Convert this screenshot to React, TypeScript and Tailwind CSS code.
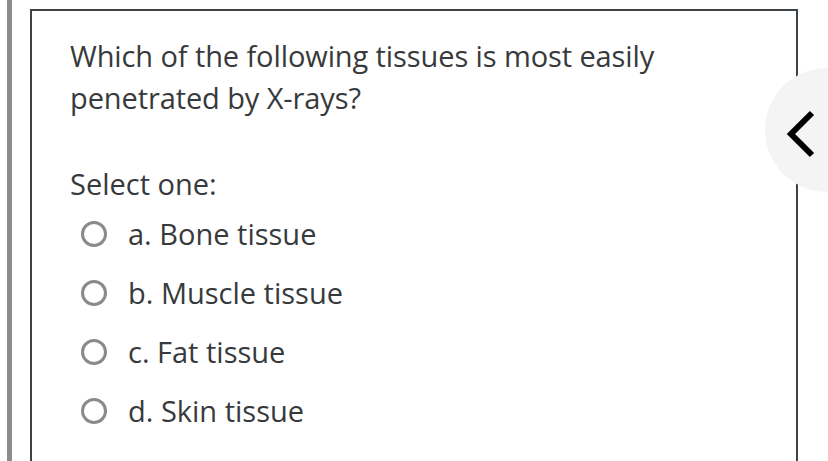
const options = ['a. Bone tissue', 'b. Muscle tissue', 'c. Fat tissue', 'd. Skin tissue'];

const Radio = () => (
  <span className="flex h-[26px] w-[26px] shrink-0 items-center justify-center rounded-full border-[3px] border-[#8a8a8a] bg-white" />
);

export default function App() {
  return (
    <div
      className="relative flex h-[461px] w-[828px] overflow-hidden bg-white text-[#373a3c]"
      style={{ fontFamily: '"Open Sans", "Noto Sans", sans-serif' }}
    >
      <div className="ml-[7px] w-[5px] shrink-0 bg-[#8c8c8c]" />
      <div className="ml-[18px] mt-[9px] h-[480px] w-[768px] shrink-0 border-2 border-b-0 border-[#3d4246] pl-[38px] pt-[24px]">
        <p className="text-[29px] leading-[42px] tracking-[-0.1px]">
          Which of the following tissues is most easily
          <br />
          penetrated by X-rays?
        </p>
        <p className="mt-[44px] text-[29px] leading-[42px]">Select one:</p>
        <div className="mt-[8px] flex flex-col gap-[17px]">
          {options.map((o) => (
            <label key={o} className="flex items-center gap-[21px] pl-[11px] text-[29px] leading-[42px]">
              <Radio />
              <span>{o}</span>
            </label>
          ))}
        </div>
      </div>
      <button className="absolute left-[765px] top-[68px] flex h-[124px] w-[124px] items-start justify-start rounded-full bg-[#f4f4f4] pl-[20px] pt-[42px]">
        <svg width="32" height="48" viewBox="0 0 32 48" fill="none">
          <path d="M27 3 L6 24 L27 45" stroke="#000" strokeWidth="6" strokeLinecap="butt" strokeLinejoin="miter" />
        </svg>
      </button>
    </div>
  );
}
